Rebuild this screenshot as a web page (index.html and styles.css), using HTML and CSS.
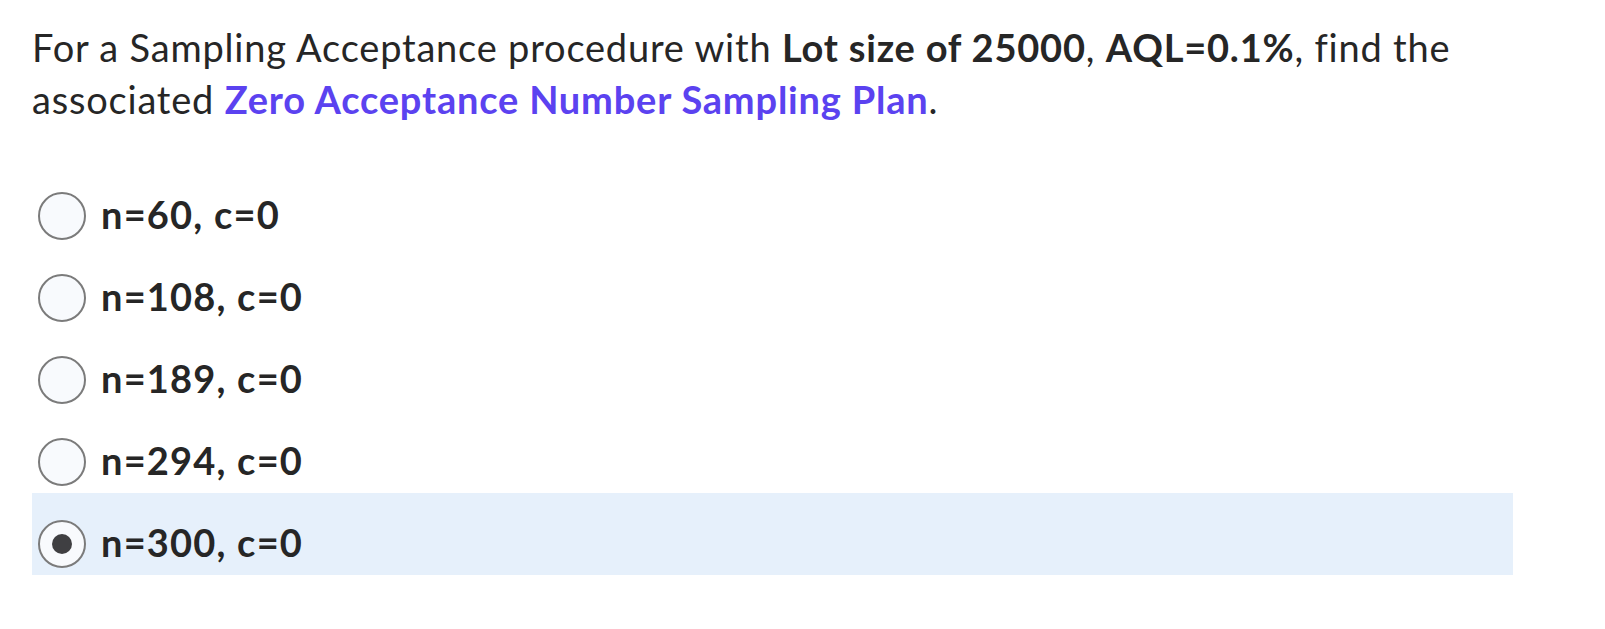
FILE: index.html
```html
<!DOCTYPE html>
<html lang="en">
<head>
<meta charset="utf-8">
<title>Sampling Plan Question</title>
<link rel="stylesheet" href="styles.css">
</head>
<body>
<div class="question">
  <p class="prompt">For a Sampling Acceptance procedure with <strong>Lot size of 25000</strong>, <strong>AQL=0.1%</strong>, find the associated <strong class="hl">Zero Acceptance Number Sampling Plan</strong>.</p>
  <div class="options">
    <label class="option"><span class="radio"></span><span class="label">n=60, c=0</span></label>
    <label class="option"><span class="radio"></span><span class="label">n=108, c=0</span></label>
    <label class="option"><span class="radio"></span><span class="label">n=189, c=0</span></label>
    <label class="option"><span class="radio"></span><span class="label">n=294, c=0</span></label>
    <label class="option selected"><span class="radio checked"></span><span class="label">n=300, c=0</span></label>
  </div>
</div>
</body>
</html>
```

FILE: styles.css
```css
html, body {
  margin: 0;
  padding: 0;
  background: #ffffff;
}
body {
  font-family: Lato, "Open Sans", sans-serif;
  color: #262626;
}
.question {
  padding: 21px 0 0 32px;
  width: 1481px;
}
.prompt {
  margin: 0;
  font-size: 38px;
  line-height: 52px;
  font-weight: 400;
  letter-spacing: 0.8px;
  width: 1460px;
}
.prompt strong {
  font-weight: 700;
}
.prompt .hl {
  color: #5b42f0;
}
.options {
  display: flex;
  flex-direction: column;
  margin-top: 40px;
}
.option {
  display: flex;
  align-items: center;
  height: 63px;
  padding: 19px 0 0 6px;
}
.option.selected {
  background: #e6f0fb;
}
.radio {
  box-sizing: border-box;
  width: 48px;
  height: 48px;
  border-radius: 50%;
  border: 2px solid #7b7b7b;
  background: #f8fafd;
  display: flex;
  align-items: center;
  justify-content: center;
  flex: none;
}
.radio.checked::after {
  content: "";
  width: 20px;
  height: 20px;
  border-radius: 50%;
  background: #3f3f42;
}
.label {
  margin-left: 15px;
  padding-bottom: 3px;
  font-size: 38px;
  font-weight: 700;
  letter-spacing: 1.2px;
  line-height: 48px;
}
```
